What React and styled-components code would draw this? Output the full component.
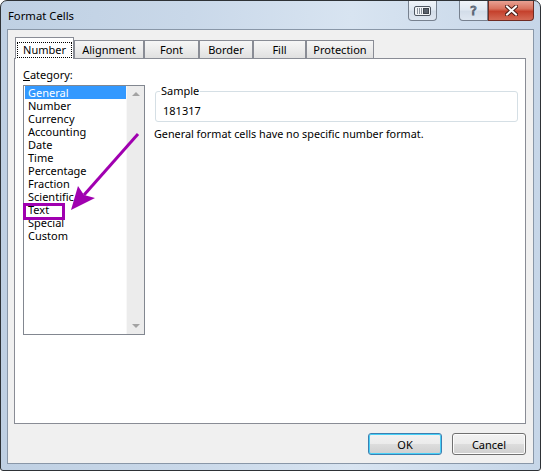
import React from 'react'
import styled, { createGlobalStyle } from 'styled-components'

const GlobalStyle = createGlobalStyle`
  html, body {
    margin: 0;
    padding: 0;
    background: #ffffff;
  }
  body {
    font-family: "Noto Sans", "Open Sans", "DejaVu Sans", sans-serif;
    font-size: 11px;
    color: #000;
  }
`

const Window = styled.div`
  position: relative;
  box-sizing: border-box;
  width: 541px;
  height: 471px;
  padding: 0 6px 6px 6px;
  border: 1px solid #2e3236;
  border-radius: 7px 7px 3px 3px;
  background: linear-gradient(90deg, #bfd0e3 0%, #c9d8e9 35%, #d8e4f1 65%, #c6d6e8 100%);
  display: flex;
  flex-direction: column;
`

const TitleBar = styled.div`
  height: 28px;
  display: flex;
  align-items: flex-start;
`

const Title = styled.div`
  flex: 1;
  padding: 7px 0 0 1px;
  font-size: 11.3px;
  color: #000;
`

const CaptionButton = styled.div`
  box-sizing: border-box;
  width: ${p => p.$w}px;
  height: 20px;
  display: flex;
  align-items: center;
  justify-content: center;
  border: 1px solid ${p => (p.$danger ? '#6f2b22' : '#77818f')};
  border-top: none;
  border-radius: ${p => p.$radius};
  background: ${p =>
    p.$danger
      ? 'linear-gradient(#e8a193 0%, #d9735f 40%, #c5412d 55%, #d46a55 100%)'
      : 'linear-gradient(#f0f4f9 0%, #e1e9f2 45%, #d3dde9 55%, #dfe7f1 100%)'};
  margin-right: ${p => p.$mr || 0}px;
`

const HelpGlyph = styled.span`
  font-family: "DejaVu Sans", sans-serif;
  font-size: 13px;
  color: #f4f6f9;
  -webkit-text-stroke: 1px #5b6676;
  line-height: 1;
`

const Body = styled.div`
  flex: 1;
  display: flex;
  flex-direction: column;
  background: #f0f0f0;
  border: 1px solid #8997a8;
  padding: 7px 7px 8px 6px;
`

const TabRow = styled.div`
  position: relative;
  z-index: 1;
  height: 22px;
  margin-bottom: -1px;
  display: flex;
  align-items: flex-end;
  padding-left: 1px;
`

const Tab = styled.div`
  box-sizing: border-box;
  width: ${p => p.$w}px;
  height: ${p => (p.$active ? 22 : 18)}px;
  margin-bottom: ${p => (p.$active ? 0 : 1)}px;
  display: flex;
  justify-content: center;
  align-items: ${p => (p.$active ? 'flex-start' : 'center')};
  padding-top: ${p => (p.$active ? 4 : 1)}px;
  border: 1px solid #898c95;
  border-bottom: none;
  background: ${p =>
    p.$active ? '#ffffff' : 'linear-gradient(#f6f6f6 0%, #ececec 50%, #e0e0e0 100%)'};
  line-height: 14px;
`

const FocusLabel = styled.span`
  border: 1px dotted #000;
  padding: 0 5px;
  line-height: 14px;
`

const Panel = styled.div`
  flex: 1;
  background: #ffffff;
  border: 1px solid #898c95;
  padding: 8px 7px 0 8px;
  display: grid;
  grid-template-columns: 122px 1fr;
  grid-template-rows: auto 1fr;
  column-gap: 10px;
  align-content: start;
`

const FieldLabel = styled.div`
  grid-column: 1 / 3;
  height: 15px;
  line-height: 15px;
  margin-bottom: 3px;
  u {
    text-decoration: underline;
    text-underline-offset: 1px;
  }
`

const ListBox = styled.div`
  box-sizing: border-box;
  height: 250px;
  border: 1px solid #828790;
  display: flex;
`

const Items = styled.div`
  flex: 1;
  padding: 0 0 0 1px;
`

const Item = styled.div`
  height: 13px;
  line-height: 13px;
  padding-left: 3px;
  white-space: nowrap;
  background: ${p => (p.$selected ? '#3399ff' : 'transparent')};
  color: ${p => (p.$selected ? '#ffffff' : '#000000')};
`

const ScrollBar = styled.div`
  width: 17px;
  display: flex;
  flex-direction: column;
  justify-content: space-between;
  align-items: center;
  background: #ececec;
  border-left: 1px solid #f8f8f8;
  padding: 6px 0 6px;
`

const Arrow = styled.span`
  width: 0;
  height: 0;
  border-left: 4px solid transparent;
  border-right: 4px solid transparent;
  ${p =>
    p.$down
      ? 'border-top: 4px solid #a3a3a3;'
      : 'border-bottom: 4px solid #a3a3a3;'}
`

const RightColumn = styled.div`
  display: flex;
  flex-direction: column;
  margin-top: -1px;
`

const GroupBox = styled.fieldset`
  margin: 0;
  padding: 0 0 3px 4px;
  border: 1px solid #d5dfe5;
  border-radius: 3px;
  min-width: 0;
`

const Legend = styled.legend`
  padding: 0 1px;
  line-height: 14px;
`

const SampleValue = styled.div`
  padding: 6px 0 0 3px;
  line-height: 14px;
`

const Description = styled.div`
  margin-top: 5px;
  line-height: 14px;
  margin-left: -1px;
  font-size: 10.8px;
`

const Footer = styled.div`
  display: flex;
  justify-content: flex-end;
  gap: 10px;
  margin-top: 9px;
`

const Button = styled.button`
  box-sizing: border-box;
  width: 74px;
  height: 22px;
  font-family: inherit;
  font-size: 11px;
  color: #000;
  border-radius: 3px;
  border: 1px solid ${p => (p.$default ? '#3c7fb1' : '#707070')};
  box-shadow: ${p => (p.$default ? 'inset 0 0 0 1px #48d0f7' : 'inset 0 0 0 1px #fcfcfc')};
  background: linear-gradient(#f2f2f2 0%, #ebebeb 50%, #dddddd 51%, #cfcfcf 100%);
  padding: 0;
`

const Annotation = styled.svg`
  position: absolute;
  left: 0;
  top: 0;
  pointer-events: none;
`

const tabs = [
  { label: 'Number', w: 59, active: true },
  { label: 'Alignment', w: 70 },
  { label: 'Font', w: 55 },
  { label: 'Border', w: 54 },
  { label: 'Fill', w: 53 },
  { label: 'Protection', w: 68 },
]

const categories = [
  'General',
  'Number',
  'Currency',
  'Accounting',
  'Date',
  'Time',
  'Percentage',
  'Fraction',
  'Scientific',
  'Text',
  'Special',
  'Custom',
]

function SnapIcon() {
  return (
    <svg width="17" height="10" viewBox="0 0 17 10">
      <rect x="0.5" y="0.5" width="16" height="9" rx="1.5" fill="#f2f4f7" stroke="#4d5560" />
      <line x1="3.5" y1="2" x2="3.5" y2="8" stroke="#8a929c" />
      <line x1="5.5" y1="2" x2="5.5" y2="8" stroke="#8a929c" />
      <line x1="7.5" y1="2" x2="7.5" y2="8" stroke="#8a929c" />
      <rect x="9.5" y="2.5" width="5" height="5" fill="#5a626d" stroke="#3e444c" />
    </svg>
  )
}

function CloseIcon() {
  return (
    <svg width="13" height="11" viewBox="0 0 13 11">
      <path d="M2 1.5 L11 9.5 M11 1.5 L2 9.5" stroke="#4a1c16" strokeWidth="4" strokeLinecap="square" />
      <path d="M2 1.5 L11 9.5 M11 1.5 L2 9.5" stroke="#ffffff" strokeWidth="2" strokeLinecap="square" />
    </svg>
  )
}

export default function App() {
  return (
    <>
      <GlobalStyle />
      <Window>
        <TitleBar>
          <Title>Format Cells</Title>
          <CaptionButton $w={29} $radius="0 0 4px 4px" $mr={22}>
            <SnapIcon />
          </CaptionButton>
          <CaptionButton $w={29} $radius="0 0 0 4px">
            <HelpGlyph>?</HelpGlyph>
          </CaptionButton>
          <CaptionButton $w={46} $radius="0 0 4px 0" $danger>
            <CloseIcon />
          </CaptionButton>
        </TitleBar>

        <Body>
          <TabRow>
            {tabs.map(t => (
              <Tab key={t.label} $w={t.w} $active={t.active}>
                {t.active ? <FocusLabel>{t.label}</FocusLabel> : t.label}
              </Tab>
            ))}
          </TabRow>

          <Panel>
            <FieldLabel>
              <u>C</u>ategory:
            </FieldLabel>
            <ListBox>
              <Items>
                {categories.map((c, i) => (
                  <Item key={c} $selected={i === 0}>
                    {c}
                  </Item>
                ))}
              </Items>
              <ScrollBar>
                <Arrow />
                <Arrow $down />
              </ScrollBar>
            </ListBox>
            <RightColumn>
              <GroupBox>
                <Legend>Sample</Legend>
                <SampleValue>181317</SampleValue>
              </GroupBox>
              <Description>General format cells have no specific number format.</Description>
            </RightColumn>
          </Panel>

          <Footer>
            <Button $default>OK</Button>
            <Button>Cancel</Button>
          </Footer>
        </Body>

        <Annotation width="541" height="471" viewBox="0 0 541 471">
          <rect x="23.5" y="203.5" width="39" height="14" fill="none" stroke="#a000b0" strokeWidth="3" />
          <line x1="137" y1="133" x2="83" y2="194" stroke="#a000b0" strokeWidth="3" />
          <polygon points="70,209 77,185 83,194 94,197" fill="#a000b0" />
        </Annotation>
      </Window>
    </>
  )
}
